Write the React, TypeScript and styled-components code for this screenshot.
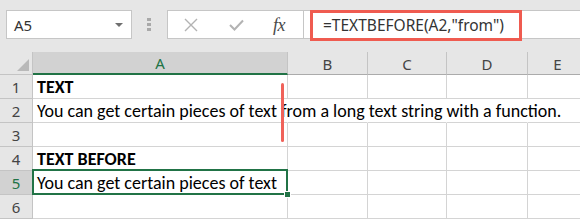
import React from "react";
import styled, { createGlobalStyle, css } from "styled-components";

const GREEN = "#217346";
const GRID = "#d4d4d4";
const HEAD_BG = "#e6e6e6";
const HEAD_SEL = "#d2d2d2";
const HEAD_LINE = "#c4c4c4";
const UI_FONT = `"Segoe UI", "Noto Sans", "Open Sans", sans-serif`;
const CELL_FONT = `Calibri, Carlito, Lato, sans-serif`;

const Global = createGlobalStyle`
  html, body { margin: 0; padding: 0; background: #ffffff; overflow: hidden; }
  #root { width: 580px; height: 220px; }
`;

const Page = styled.div`
  width: 580px;
  height: 220px;
  display: flex;
  flex-direction: column;
  background: #fff;
  position: relative;
  overflow: hidden;
`;

const Toolbar = styled.div`
  height: 52px;
  flex: none;
  background: ${HEAD_BG};
  display: flex;
  align-items: flex-start;
  padding: 10px 0 0 6px;
  box-sizing: border-box;
`;

const NameBox = styled.div`
  width: 126px;
  height: 29px;
  box-sizing: border-box;
  background: #fff;
  border: 1px solid #c6c6c6;
  display: flex;
  align-items: center;
  justify-content: space-between;
  padding: 0 8px 0 7px;
  font-family: ${UI_FONT};
  font-size: 15px;
  color: #333;
`;

const Caret = styled.span`
  width: 0;
  height: 0;
  border-left: 4px solid transparent;
  border-right: 4px solid transparent;
  border-top: 4px solid #6f6f6f;
`;

const Grip = styled.div`
  width: 4px;
  margin: 8px 16px 0 15px;
  display: flex;
  flex-direction: column;
  gap: 2px;
  span {
    width: 4px;
    height: 3px;
    background: #a9a9a9;
  }
`;

const FxButtons = styled.div`
  width: 137px;
  height: 29px;
  box-sizing: border-box;
  background: #fff;
  border: 1px solid #c6c6c6;
  display: flex;
  align-items: center;
  padding-left: 16px;
`;

const IconSlot = styled.div<{ $w: number }>`
  width: ${(p) => p.$w}px;
  display: flex;
  align-items: center;
  justify-content: flex-start;
`;

const FxLabel = styled.span`
  font-family: "Liberation Serif", "DejaVu Serif", serif;
  font-style: italic;
  font-size: 18px;
  color: #4a4a4a;
  letter-spacing: -0.5px;
  line-height: 1;
`;

const FormulaBar = styled.div`
  flex: 1;
  height: 29px;
  box-sizing: border-box;
  background: #fff;
  border-top: 1px solid #c6c6c6;
  border-bottom: 1px solid #c6c6c6;
  display: flex;
  align-items: center;
  padding-left: 6px;
`;

const FormulaBox = styled.div`
  height: 31px;
  width: 212px;
  box-sizing: border-box;
  border: 3px solid #ef5b50;
  display: flex;
  align-items: center;
  padding-left: 10px;
  margin-top: 1px;
  font-family: ${UI_FONT};
  font-size: 15.5px;
  color: #333;
  white-space: nowrap;
`;

const Sheet = styled.div`
  display: grid;
  grid-template-columns: 33px 255px 80px 79px 81px 60px;
  grid-template-rows: 23px repeat(6, 24px);
`;

const Corner = styled.div`
  background: ${HEAD_BG};
  border-right: 1px solid ${HEAD_LINE};
  border-bottom: 1px solid ${HEAD_LINE};
  position: relative;
  &::after {
    content: "";
    position: absolute;
    right: 3px;
    bottom: 3px;
    width: 0;
    height: 0;
    border-left: 12px solid transparent;
    border-bottom: 12px solid #b9b9b9;
  }
`;

const ColHead = styled.div<{ $sel?: boolean }>`
  background: ${(p) => (p.$sel ? HEAD_SEL : HEAD_BG)};
  color: ${(p) => (p.$sel ? GREEN : "#444")};
  border-right: 1px solid ${HEAD_LINE};
  border-bottom: ${(p) => (p.$sel ? `2px solid ${GREEN}` : `1px solid #ababab`)};
  box-sizing: border-box;
  font-family: ${UI_FONT};
  font-size: 15px;
  display: flex;
  align-items: center;
  justify-content: center;
  padding-top: 1px;
`;

const RowHead = styled.div<{ $sel?: boolean }>`
  background: ${(p) => (p.$sel ? HEAD_SEL : HEAD_BG)};
  color: ${(p) => (p.$sel ? GREEN : "#444")};
  border-right: 1px solid ${HEAD_LINE};
  border-bottom: 1px solid ${HEAD_LINE};
  box-sizing: border-box;
  font-family: ${UI_FONT};
  font-size: 15px;
  display: flex;
  align-items: center;
  justify-content: center;
`;

const Cell = styled.div<{ $bold?: boolean; $spill?: boolean; $open?: boolean; $selected?: boolean }>`
  box-sizing: border-box;
  border-bottom: 1px solid ${GRID};
  border-right: ${(p) => (p.$open ? "1px solid transparent" : `1px solid ${GRID}`)};
  font-family: ${CELL_FONT};
  font-size: 18px;
  font-weight: ${(p) => (p.$bold ? 700 : 400)};
  color: #000;
  display: flex;
  align-items: center;
  padding-left: 4px;
  padding-top: 1px;
  white-space: nowrap;
  overflow: ${(p) => (p.$spill || p.$selected ? "visible" : "hidden")};
  position: relative;
  z-index: ${(p) => (p.$spill || p.$selected ? 1 : 0)};
  ${(p) =>
    p.$selected &&
    css`
      &::after {
        content: "";
        position: absolute;
        left: -1px;
        top: -2px;
        right: -1px;
        bottom: -1px;
        border: 2px solid ${GREEN};
      }
      &::before {
        content: "";
        position: absolute;
        right: -4px;
        bottom: -4px;
        width: 5px;
        height: 5px;
        background: ${GREEN};
        border: 1px solid #fff;
        z-index: 2;
      }
    `}
`;

const Marker = styled.div`
  position: absolute;
  left: 281px;
  top: 83px;
  width: 3px;
  height: 59px;
  border-radius: 2px;
  background: #f0625a;
  z-index: 5;
`;

const cols = ["A", "B", "C", "D", "E"];

type RowDef = { a: string; bold?: boolean; spill?: boolean };
const rows: RowDef[] = [
  { a: "TEXT", bold: true },
  { a: "You can get certain pieces of text from a long text string with a function.", spill: true },
  { a: "" },
  { a: "TEXT BEFORE", bold: true },
  { a: "You can get certain pieces of text" },
  { a: "" },
];

export default function App() {
  return (
    <Page>
      <Global />
      <Toolbar>
        <NameBox>
          <span>A5</span>
          <Caret />
        </NameBox>
        <Grip>
          <span />
          <span />
          <span />
        </Grip>
        <FxButtons>
          <IconSlot $w={45}>
            <svg width="14" height="14" viewBox="0 0 14 14">
              <path d="M1 1 L13 13 M13 1 L1 13" stroke="#b3b3b3" strokeWidth="1.4" fill="none" />
            </svg>
          </IconSlot>
          <IconSlot $w={44}>
            <svg width="15" height="12" viewBox="0 0 15 12">
              <path d="M1 6 L5.5 10.5 L14 1.5" stroke="#b3b3b3" strokeWidth="2" fill="none" />
            </svg>
          </IconSlot>
          <IconSlot $w={30}>
            <FxLabel>fx</FxLabel>
          </IconSlot>
        </FxButtons>
        <FormulaBar>
          <FormulaBox>=TEXTBEFORE(A2,"from")</FormulaBox>
        </FormulaBar>
      </Toolbar>
      <Sheet>
        <Corner />
        {cols.map((c) => (
          <ColHead key={c} $sel={c === "A"}>
            {c}
          </ColHead>
        ))}
        {rows.map((r, i) => (
          <React.Fragment key={i}>
            <RowHead $sel={i === 4}>{i + 1}</RowHead>
            <Cell $bold={r.bold} $spill={r.spill} $open={r.spill} $selected={i === 4}>
              {r.a}
            </Cell>
            {cols.slice(1).map((c, j) => (
              <Cell key={c} $open={r.spill && j < 3} />
            ))}
          </React.Fragment>
        ))}
      </Sheet>
      <Marker />
    </Page>
  );
}
